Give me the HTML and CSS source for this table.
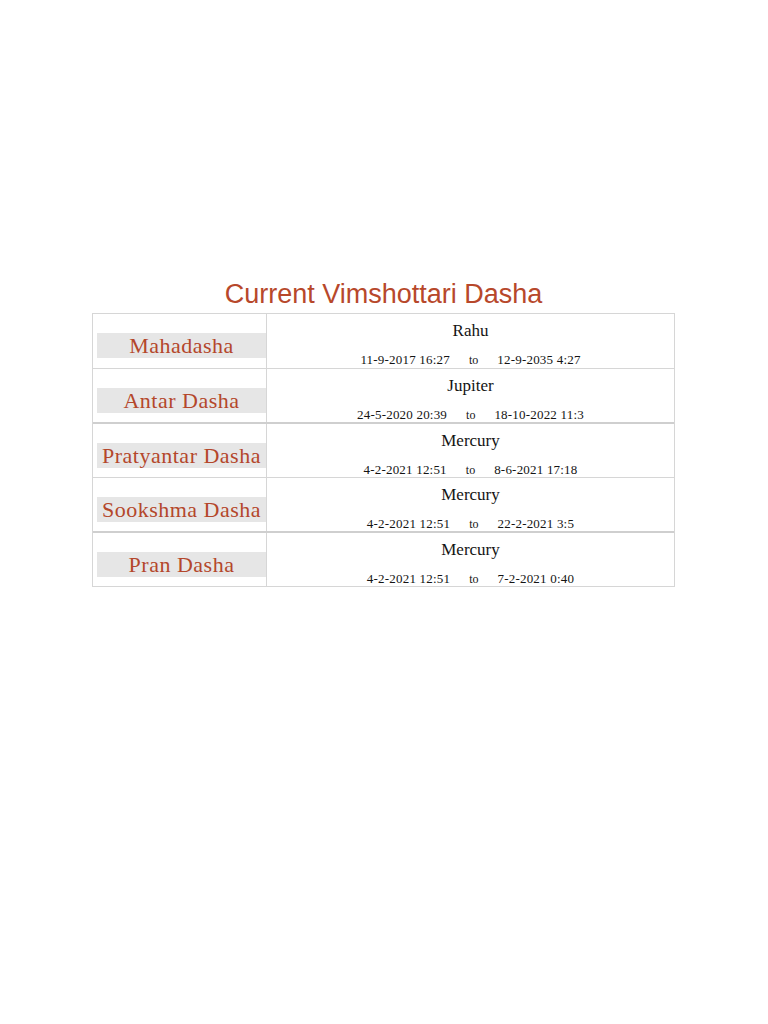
FILE: index.html
```html
<!DOCTYPE html>
<html lang="en">
<head>
<meta charset="utf-8">
<title>Current Vimshottari Dasha</title>
<link rel="stylesheet" href="styles.css">
</head>
<body>
<div class="wrap">
  <h1 class="title">Current Vimshottari Dasha</h1>
  <div class="dasha-table">
    <div class="row">
      <div class="label-cell"><div class="label">Mahadasha</div></div>
      <div class="value-cell">
        <div class="planet">Rahu</div>
        <div class="period">11-9-2017 16:27<span class="to">to</span>12-9-2035 4:27</div>
      </div>
    </div>
    <div class="row">
      <div class="label-cell"><div class="label">Antar Dasha</div></div>
      <div class="value-cell">
        <div class="planet">Jupiter</div>
        <div class="period">24-5-2020 20:39<span class="to">to</span>18-10-2022 11:3</div>
      </div>
    </div>
    <div class="row row-thick">
      <div class="label-cell"><div class="label">Pratyantar Dasha</div></div>
      <div class="value-cell">
        <div class="planet">Mercury</div>
        <div class="period">4-2-2021 12:51<span class="to">to</span>8-6-2021 17:18</div>
      </div>
    </div>
    <div class="row">
      <div class="label-cell"><div class="label">Sookshma Dasha</div></div>
      <div class="value-cell">
        <div class="planet">Mercury</div>
        <div class="period">4-2-2021 12:51<span class="to">to</span>22-2-2021 3:5</div>
      </div>
    </div>
    <div class="row row-thick">
      <div class="label-cell"><div class="label">Pran Dasha</div></div>
      <div class="value-cell">
        <div class="planet">Mercury</div>
        <div class="period">4-2-2021 12:51<span class="to">to</span>7-2-2021 0:40</div>
      </div>
    </div>
  </div>
</div>
</body>
</html>
```

FILE: styles.css
```css
html, body {
  margin: 0;
  padding: 0;
  background: #ffffff;
}

.wrap {
  width: 583px;
  margin: 0 0 0 92px;
  padding-top: 279px;
}

.title {
  margin: 0 0 3px;
  font-family: "Liberation Sans", Arial, sans-serif;
  font-weight: normal;
  font-size: 27px;
  line-height: 31px;
  color: #b7482b;
  text-align: center;
}

.dasha-table {
  border: 1px solid #d6d6d6;
}

.row {
  display: flex;
  height: 53px;
  border-top: 1px solid #d6d6d6;
}

.row:first-child {
  border-top: none;
  height: 54px;
}

.row-thick {
  border-top: 2px solid #cfcfcf;
}

.label-cell {
  width: 174px;
  flex: none;
  border-right: 1px solid #d6d6d6;
  padding: 19px 0 0 4px;
  box-sizing: border-box;
}

.label {
  height: 25px;
  background: #e6e6e6;
  font-family: "Liberation Serif", "Times New Roman", serif;
  font-size: 22px;
  line-height: 25px;
  letter-spacing: 0.5px;
  color: #b4472b;
  text-align: center;
  white-space: nowrap;
}

.value-cell {
  flex: 1;
  padding-top: 6px;
  text-align: center;
  font-family: "Liberation Serif", "Times New Roman", serif;
  color: #141414;
}

.planet {
  font-size: 17px;
  line-height: 22px;
}

.period {
  margin-top: 9px;
  font-size: 13px;
  line-height: 18px;
  letter-spacing: 0.2px;
  white-space: nowrap;
}

.to {
  font-size: 12px;
  letter-spacing: 0;
  margin: 0 19px;
}
```
